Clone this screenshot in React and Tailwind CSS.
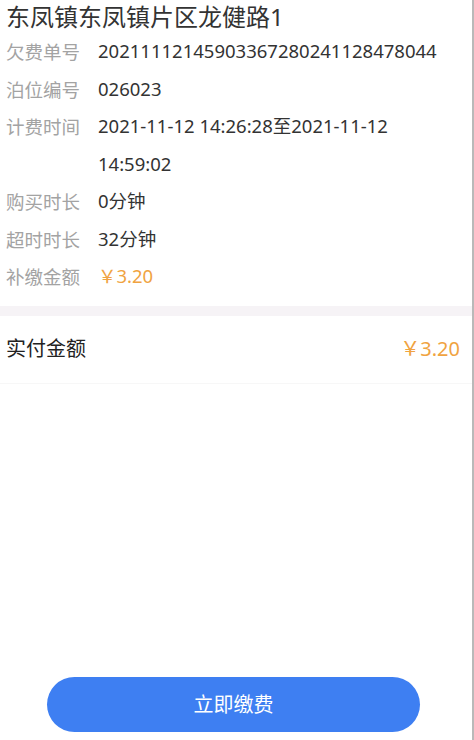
const rows = [
  { label: "欠费单号", value: "20211112145903367280241128478044" },
  { label: "泊位编号", value: "026023" },
  { label: "计费时间", value: "2021-11-12 14:26:28至2021-11-12 14:59:02" },
  { label: "购买时长", value: "0分钟" },
  { label: "超时时长", value: "32分钟" },
  { label: "补缴金额", value: "￥3.20", price: true },
];

const App = () => {
  return (
    <div
      className="flex h-[740px] w-[474px] bg-white"
      style={{ fontFamily: '"Noto Sans", "Noto Sans CJK SC", sans-serif' }}
    >
      <div className="flex flex-1 flex-col border-r-2 border-[#b9b9b9]">
        {/* Order info */}
        <div className="pl-[6px] pr-3 pt-[2px]">
          <h1 className="text-[24px] leading-[30px] text-[#333]">东凤镇东凤镇片区龙健路1</h1>
          <div className="flex flex-col">
            {rows.map((row) => (
              <div key={row.label} className="flex text-[18.5px] leading-[37.5px]">
                <span className="w-[92px] shrink-0 pt-[2px] leading-[35.5px] text-[#a3a3a3]">{row.label}</span>
                <span className={row.price ? "text-[#f0a341]" : "text-[#333]"}>{row.value}</span>
              </div>
            ))}
          </div>
        </div>

        <div className="mt-[11px] h-[10px] bg-[#f6f3f6]" />

        {/* Total */}
        <div className="flex h-[68px] items-center justify-between border-b border-[#f7f7f7] pl-[6px] pr-3">
          <span className="text-[20px] text-[#222]">实付金额</span>
          <span className="text-[20px] text-[#f0a341]">￥3.20</span>
        </div>

        <div className="flex-1" />

        <div className="flex justify-center pb-2 pr-[5px]">
          <button className="h-[55px] w-[373px] rounded-full bg-[#3e7ff2] text-[20px] text-white">
            立即缴费
          </button>
        </div>
      </div>
    </div>
  );
};

export default App;
